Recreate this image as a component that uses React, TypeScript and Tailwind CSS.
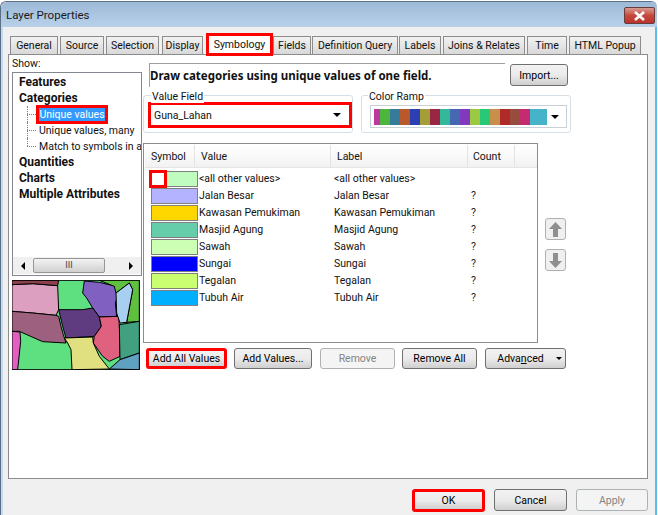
const tabs = [
  { label: "General", w: "w-[48px]" },
  { label: "Source", w: "ml-[2px] w-[44px]" },
  { label: "Selection", w: "ml-[2px] w-[53px]" },
  { label: "Display", w: "ml-[3px] w-[41px]" },
  { label: "Symbology", w: "ml-[3px] w-[67px]", active: true },
  { label: "Fields", w: "w-[38px]" },
  { label: "Definition Query", w: "ml-[1px] w-[86px]" },
  { label: "Labels", w: "ml-[1px] w-[42px]" },
  { label: "Joins & Relates", w: "ml-[2px] w-[82px]" },
  { label: "Time", w: "ml-[2px] w-[40px]" },
  { label: "HTML Popup", w: "ml-[2px] w-[72px]" },
];

const rows = [
  { value: "<all other values>", color: "bg-[#c0fcc0]", first: true },
  { value: "Jalan Besar", color: "bg-[#b3b3ff]" },
  { value: "Kawasan Pemukiman", color: "bg-[#ffd700]" },
  { value: "Masjid Agung", color: "bg-[#66cdaa]" },
  { value: "Sawah", color: "bg-[#ccffb3]" },
  { value: "Sungai", color: "bg-[#0000ff]" },
  { value: "Tegalan", color: "bg-[#c9ff70]" },
  { value: "Tubuh Air", color: "bg-[#00b0ff]" },
];

const ramp = [
  "bg-[#bc3a9e] w-[6px]", "bg-[#4db63f] w-[10px]", "bg-[#367b99] w-[10px]", "bg-[#b9582b] w-[10px]",
  "bg-[#2c40b4] w-[10px]", "bg-[#a49e38] w-[10px]", "bg-[#9b2644] w-[10px]", "bg-[#33b89a] w-[10px]",
  "bg-[#4668b3] w-[10px]", "bg-[#8339bd] w-[10px]", "bg-[#9bca42] w-[10px]", "bg-[#28c878] w-[10px]",
  "bg-[#c78f49] w-[10px]", "bg-[#b02a2a] w-[10px]", "bg-[#974d3e] w-[10px]", "bg-[#c42b70] w-[10px]",
  "bg-[#46b4c8] w-[17px]",
];

const regions = [
  { fill: "#5fe080", d: "38,452 420,452 420,720 38,720" },
  { fill: "#dc9fc0", d: "38,465 100,462 175,468 178,540 170,557 100,550 38,545" },
  { fill: "#8c3f4d", d: "38,452 178,452 175,468 100,462 38,465" },
  { fill: "#9d607e", d: "38,545 100,550 170,557 178,560 185,590 192,615 200,640 130,636 60,605 38,605" },
  { fill: "#e060c0", d: "38,605 62,607 64,635 55,720 38,720" },
  { fill: "#8060c0", d: "255,454 250,490 262,505 280,535 300,562 352,560 348,520 355,500 350,470 300,458" },
  { fill: "#5f3c80", d: "178,540 250,540 280,535 300,562 306,590 285,620 200,625 190,590" },
  { fill: "#e0e080", d: "195,625 280,622 282,640 300,680 330,718 218,720 215,660 205,640" },
  { fill: "#e0607f", d: "300,562 358,560 362,620 362,680 330,695 310,680 282,640 285,620 306,590" },
  { fill: "#5fc040", d: "300,452 420,452 420,575 382,578 400,480 390,460 350,490 345,470" },
  { fill: "#a8cff0", d: "350,490 390,460 400,480 382,578 362,580 352,550" },
  { fill: "#40a080", d: "360,585 420,575 420,670 362,690" },
  { fill: "#60a0c0", d: "330,718 362,690 420,670 420,720" },
];

function Btn({ children, className = "", disabled = false }: { children: React.ReactNode; className?: string; disabled?: boolean }) {
  return (
    <div
      className={`flex shrink-0 items-center justify-center rounded-[3px] border ${
        disabled
          ? "border-[#adb2b5] bg-[#f4f4f4] text-[#838383]"
          : "border-[#707070] bg-gradient-to-b from-[#f2f2f2] via-[#ebebeb] to-[#cfcfcf] text-black"
      } ${className}`}
    >
      {children}
    </div>
  );
}

function Caret() {
  return <div className="h-0 w-0 border-x-[4px] border-t-[4px] border-x-transparent border-t-black" />;
}

function Branch({ h }: { h: string }) {
  return (
    <>
      <div className={`absolute left-[8px] top-0 border-l border-dotted border-[#808080] ${h}`} />
      <div className="absolute left-[8px] top-[8px] w-[9px] border-t border-dotted border-[#808080]" />
    </>
  );
}

function Tree() {
  const head = "flex h-[16px] items-center text-[12px] font-bold";
  return (
    <div className="flex h-[204px] w-[130px] flex-col border border-[#828790] bg-white">
      <div className="flex-1 overflow-hidden pl-[6px] pt-[1px]">
        <div className={head}>Features</div>
        <div className={head}>Categories</div>
        <div className="relative flex h-[16px] items-center pl-[17px]">
          <Branch h="h-[16px]" />
          <span className="flex h-[19px] w-[72px] shrink-0 items-center justify-center whitespace-nowrap border-[3px] border-[#ff0000] bg-[#3399ff] text-white">
            Unique values
          </span>
        </div>
        <div className="relative flex h-[16px] items-center whitespace-nowrap pl-[20px]">
          <Branch h="h-[16px]" />
          Unique values, many
        </div>
        <div className="relative flex h-[16px] items-center whitespace-nowrap pl-[20px]">
          <Branch h="h-[8px]" />
          Match to symbols in a
        </div>
        <div className={head}>Quantities</div>
        <div className={head}>Charts</div>
        <div className={head}>Multiple Attributes</div>
      </div>
      <div className="mb-[1px] flex h-[17px] items-center bg-[#f0f0f0]">
        <div className="flex w-[20px] justify-center">
          <div className="h-0 w-0 border-y-[4px] border-r-[4px] border-y-transparent border-r-black" />
        </div>
        <div className="flex h-[15px] w-[72px] items-center justify-center rounded-[2px] border border-[#979797] bg-gradient-to-b from-[#f3f3f3] to-[#d0d0d0] text-[9px] text-[#444]">
          III
        </div>
        <div className="ml-auto flex w-[20px] justify-center">
          <div className="h-0 w-0 border-y-[4px] border-l-[4px] border-y-transparent border-l-black" />
        </div>
      </div>
    </div>
  );
}

function ArrowBtn({ down = false }: { down?: boolean }) {
  return (
    <div className="flex h-[22px] w-[21px] items-center justify-center rounded-[3px] border border-[#b0b0b0] bg-[#f0f0f0]">
      <svg width="13" height="15" viewBox="0 0 13 15">
        <polygon
          fill="#8f8f8f"
          points={down ? "4,0 9,0 9,8 13,8 6.5,15 0,8 4,8" : "6.5,0 13,7 9,7 9,15 4,15 4,7 0,7"}
        />
      </svg>
    </div>
  );
}

export default function App() {
  return (
    <div className="h-[515px] w-[658px] overflow-hidden bg-white pt-[1px] font-['Roboto',sans-serif] text-[10.5px] leading-[13px] text-[#111]">
      <div className="flex h-[514px] w-[657px] flex-col rounded-t-[6px] border-t border-l border-[#5b6f85] bg-[#f0f0f0]">
        <div className="flex h-[25px] shrink-0 items-center rounded-t-[6px] bg-gradient-to-b from-[#9db9d7] to-[#b9d1ea] pl-[5px] pr-[2px] pt-[2px] text-[11.5px] text-[#1a1a1a]">
          <span>Layer Properties</span>
          <div className="ml-auto flex h-[17px] w-[31px] items-center justify-center rounded-[2px] border border-[#6b3a3a] bg-gradient-to-b from-[#d99a90] via-[#c4483e] to-[#b8342c]">
            <svg width="13" height="10" viewBox="0 0 13 10">
              <path d="M2 1 L11 9 M11 1 L2 9" stroke="#fff" strokeWidth="2.6" />
            </svg>
          </div>
        </div>
        <div className="flex min-h-0 flex-1 flex-col border-r-[2px] border-l-[2px] border-r-[#5abcec] border-l-[#c5d9ee]">
          <div className="mt-[6px] flex h-[21px] shrink-0 items-end pl-[7px]">
            {tabs.map((t) =>
              t.active ? (
                <div
                  key={t.label}
                  className={`${t.w} relative z-10 -mb-[2px] flex h-[23px] shrink-0 items-center justify-center border-[3px] border-[#ff0000] bg-white`}
                >
                  {t.label}
                </div>
              ) : (
                <div
                  key={t.label}
                  className={`${t.w} flex h-[18px] shrink-0 items-center justify-center whitespace-nowrap border border-b-0 border-[#8c8c8c] bg-gradient-to-b from-[#f2f2f2] to-[#d8d8d8]`}
                >
                  {t.label}
                </div>
              ),
            )}
          </div>
          <div className="ml-[5px] flex h-[425px] w-[640px] shrink-0 border border-[#8c8c8c] bg-white pl-[3px]">
            <div className="flex w-[131px] shrink-0 flex-col">
              <div className="flex h-[17px] items-end pb-[2px]">Show:</div>
              <Tree />
              <svg className="mt-[4px]" width="128" height="90" viewBox="38 452 384 268">
                {regions.map((r) => (
                  <polygon key={r.d} points={r.d} fill={r.fill} stroke="#000" strokeWidth="3" />
                ))}
              </svg>
            </div>
            <div className="flex min-w-0 flex-1 flex-col">
              <div className="flex h-[32px] shrink-0">
                <div className="ml-[6px] mt-[8px] flex h-[24px] w-[356px] items-center border-t border-l border-[#a0a0a0] font-['Noto_Sans',sans-serif] text-[11.5px] font-bold">
                  Draw categories using unique values of one field.
                </div>
                <Btn className="ml-[5px] mt-[9px] h-[22px] w-[58px]">Import...</Btn>
              </div>
              <div className="mt-[8px] flex h-[38px] shrink-0">
                <div className="relative h-[38px] w-[210px] rounded-[3px] border border-[#d5dfe5]">
                  <span className="absolute -top-[6px] left-[7px] bg-white px-[1px]">Value Field</span>
                  <div className="ml-[4px] mt-[6px] flex h-[26px] w-[204px] items-center justify-between border-[3px] border-[#ff0000] pl-[3px] pr-[8px]">
                    Guna_Lahan
                    <Caret />
                  </div>
                </div>
                <div className="relative ml-[8px] h-[38px] w-[210px] rounded-[3px] border border-[#d5dfe5]">
                  <span className="absolute -top-[6px] left-[6px] bg-white px-[1px]">Color Ramp</span>
                  <div className="ml-[8px] mt-[9px] flex h-[23px] w-[197px] items-center border border-[#c8d0d8] pl-[3px] pr-[7px]">
                    <div className="flex h-[16px]">
                      {ramp.map((c) => (
                        <div key={c} className={c} />
                      ))}
                    </div>
                    <div className="ml-auto">
                      <Caret />
                    </div>
                  </div>
                </div>
              </div>
              <div className="mt-[10px] flex shrink-0">
                <div className="h-[200px] w-[395px] shrink-0 border border-[#8c8c8c] bg-white pl-[1px] pt-[1px]">
                  <div className="flex h-[23px] border-b border-[#e5e5e5] bg-gradient-to-b from-white to-[#f2f2f2]">
                    <div className="flex w-[50px] items-center border-r border-[#e3e3e3] pl-[6px]">Symbol</div>
                    <div className="flex w-[136px] items-center border-r border-[#e3e3e3] pl-[6px]">Value</div>
                    <div className="flex w-[137px] items-center border-r border-[#e3e3e3] pl-[6px]">Label</div>
                    <div className="flex w-[47px] items-center border-r border-[#e3e3e3] pl-[5px]">Count</div>
                  </div>
                  <div className="pt-[2px]">
                    {rows.map((r) => (
                      <div key={r.value} className="flex h-[17px] items-center">
                        <div className="relative ml-[6px] flex h-[16px] w-[47px] shrink-0">
                          <div className={`h-full w-full border border-[#808080] ${r.color}`} />
                          {r.first && (
                            <div className="absolute -top-[1px] -left-[2px] h-[18px] w-[18px] border-[3px] border-[#ff0000] bg-white" />
                          )}
                        </div>
                        <div className="w-[136px] shrink-0 whitespace-nowrap pl-[1px]">{r.value}</div>
                        <div className="w-[137px] shrink-0 whitespace-nowrap">{r.value}</div>
                        {!r.first && <div className="text-[#222]">?</div>}
                      </div>
                    ))}
                  </div>
                </div>
                <div className="ml-[7px] flex flex-col gap-[9px] pt-[75px]">
                  <ArrowBtn />
                  <ArrowBtn down />
                </div>
              </div>
              <div className="mt-[5px] flex h-[21px] shrink-0 items-center">
                <Btn className="ml-[3px] h-[21px] w-[81px] !border-[3px] !border-[#ff0000]">Add All Values</Btn>
                <Btn className="ml-[7px] h-[21px] w-[78px]">Add Values...</Btn>
                <Btn disabled className="ml-[8px] h-[21px] w-[75px]">Remove</Btn>
                <Btn className="ml-[7px] h-[21px] w-[75px]">Remove All</Btn>
                <Btn className="relative ml-[8px] h-[21px] w-[81px] pr-[10px]">
                  <span>
                    Adva<span className="underline">n</span>ced
                  </span>
                  <div className="absolute top-[8px] right-[3px] h-0 w-0 border-x-[3px] border-t-[3px] border-x-transparent border-t-black" />
                </Btn>
              </div>
            </div>
          </div>
          <div className="flex flex-1 items-start pl-[409px] pt-[10px]">
            <Btn className="h-[23px] w-[73px] !border-[3px] !border-[#ff0000]">OK</Btn>
            <Btn className="ml-[9px] h-[22px] w-[73px]">Cancel</Btn>
            <Btn disabled className="ml-[9px] h-[22px] w-[72px]">Apply</Btn>
          </div>
        </div>
      </div>
    </div>
  );
}
